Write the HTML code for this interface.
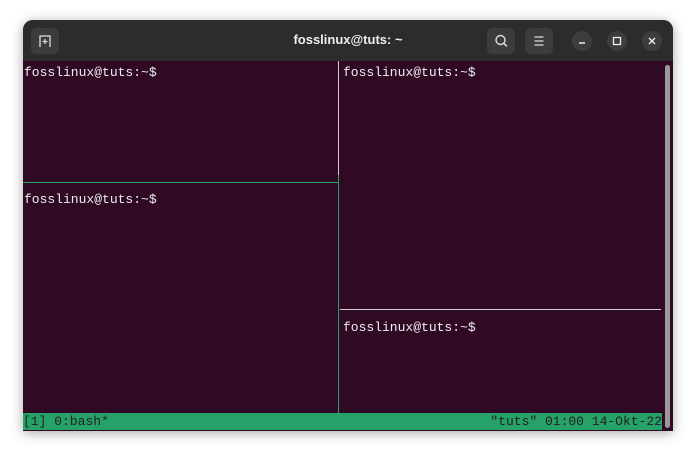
<!DOCTYPE html>
<html><head><style>
body{margin:0;width:696px;height:456px;background:#fff;position:relative;overflow:hidden;font-family:"Liberation Mono",monospace}
.win{position:absolute;left:23px;top:20px;width:650px;height:411px;background:#300a24;border-radius:10px 10px 0 0;box-shadow:0 2px 12px rgba(0,0,0,.35);overflow:hidden}
.tb{position:absolute;left:0;top:0;width:650px;height:41px;background:#2c2c2c}
.btn{position:absolute;top:8px;width:28px;height:26px;background:#3c3c3c;border-radius:5px}
.c{position:absolute;top:11px;width:20px;height:20px;border-radius:50%;background:#3d3d3d;color:#eee;font:12px "Liberation Sans",sans-serif;text-align:center;line-height:20px}
.title{position:absolute;left:0;width:650px;top:12px;text-align:center;color:#eee;font:bold 13px "Liberation Sans",sans-serif}
.t{position:absolute;color:#eee;font-size:13px;line-height:15px;white-space:pre}
.l{position:absolute}
.sb{position:absolute;left:0;top:393px;width:639px;height:17px;background:#26a269;color:#202020;font-size:13px;line-height:17px;white-space:pre;display:flex;justify-content:space-between}
</style></head><body>
<div class="win">
<div class="tb">
<div class="btn" style="left:8px"><svg width="28" height="26"><path d="M9 19V8h10v11M14 11v5M11.5 13.5h5" stroke="#ddd" stroke-width="1.3" fill="none"/></svg></div>
<div class="title">fosslinux@tuts: ~</div>
<div class="btn" style="left:464px"><svg width="28" height="26"><circle cx="13.5" cy="12" r="4.5" stroke="#ddd" stroke-width="1.4" fill="none"/><path d="M16.8 15.3l3 3" stroke="#ddd" stroke-width="1.5"/></svg></div>
<div class="btn" style="left:502px"><svg width="28" height="26"><path d="M9.5 9h9M9.5 13h9M9.5 17h9" stroke="#ddd" stroke-width="1.2"/></svg></div>
<div class="c" style="left:549px"><svg width="20" height="20"><path d="M7 12h6" stroke="#eee" stroke-width="1.4"/></svg></div>
<div class="c" style="left:584px"><svg width="20" height="20"><rect x="6.5" y="6.5" width="7" height="7" stroke="#eee" stroke-width="1.3" fill="none"/></svg></div>
<div class="c" style="left:619px"><svg width="20" height="20"><path d="M7 7l6 6M13 7l-6 6" stroke="#eee" stroke-width="1.4"/></svg></div>
</div>
<div class="t" style="left:1px;top:45px">fosslinux@tuts:~$</div>
<div class="t" style="left:1px;top:172px">fosslinux@tuts:~$</div>
<div class="t" style="left:320px;top:45px">fosslinux@tuts:~$</div>
<div class="t" style="left:320px;top:300px">fosslinux@tuts:~$</div>
<div class="l" style="left:315px;top:41px;width:1px;height:114px;background:#ccc"></div>
<div class="l" style="left:315px;top:155px;width:1px;height:238px;background:#26a269"></div>
<div class="l" style="left:0;top:162px;width:316px;height:1px;background:#26a269"></div>
<div class="l" style="left:317px;top:289px;width:321px;height:1px;background:#ccc"></div>
<div class="l" style="left:642px;top:45px;width:5px;height:363px;background:#999;border-radius:3px"></div>
<div class="sb"><span>[1] 0:bash*</span><span>"tuts" 01:00 14-Okt-22</span></div>
</div>
</body></html>
